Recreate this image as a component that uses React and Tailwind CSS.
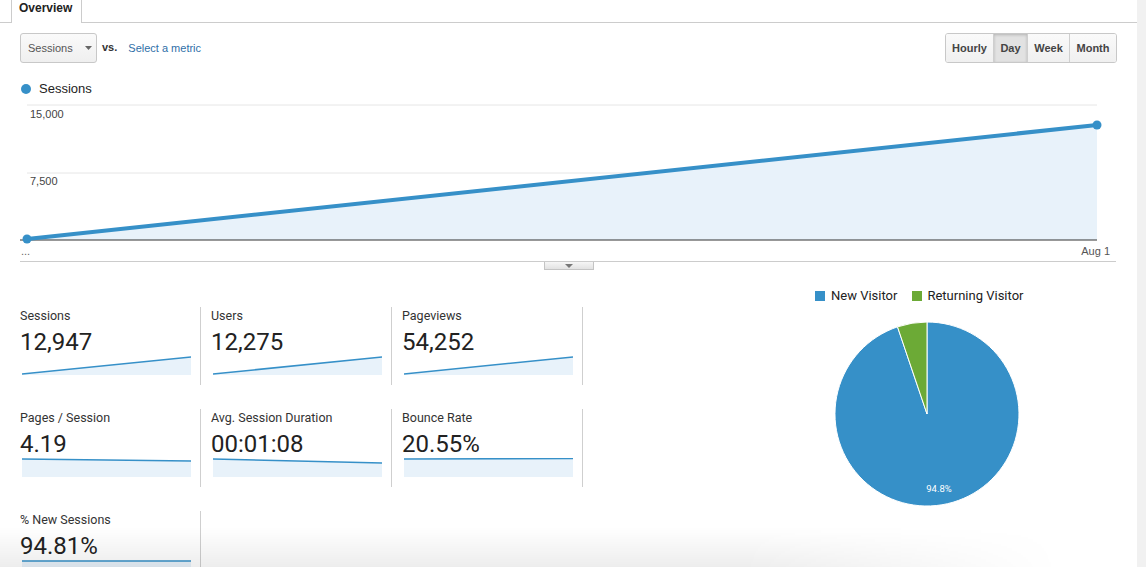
import React from 'react';

const ARIAL = { fontFamily: '"Liberation Sans", Arial, sans-serif' };
const ROBOTO = { fontFamily: 'Roboto, "Liberation Sans", Arial, sans-serif' };

const BLUE = '#3690c8';
const FILL = '#e8f2fa';

// y0/y1 are the line ends inside a 169x19 box
const metrics = [
  [
    { label: 'Sessions', value: '12,947', line: [18, 1] },
    { label: 'Users', value: '12,275', line: [18, 1] },
    { label: 'Pageviews', value: '54,252', line: [18, 1] },
  ],
  [
    { label: 'Pages / Session', value: '4.19', line: [1, 3] },
    { label: 'Avg. Session Duration', value: '00:01:08', line: [1, 5] },
    { label: 'Bounce Rate', value: '20.55%', line: [1, 0.5] },
  ],
  [{ label: '% New Sessions', value: '94.81%', line: [1, 1] }],
];

const Sparkline = ({ line }) => {
  const [a, b] = line;
  return (
    <svg width="169" height="19" className="block ml-[2px]">
      <polygon points={`0,${a} 169,${b} 169,19 0,19`} fill={FILL} />
      <polyline points={`0,${a} 169,${b}`} fill="none" stroke={BLUE} strokeWidth="1.5" />
    </svg>
  );
};

const MetricCell = ({ m, first }) => (
  <div className={`${first ? 'w-[181px]' : 'w-[191px] pl-[10px]'} border-r border-[#cfcfcf] pt-[2px] pb-[10px]`}>
    <div className="text-[12.5px] leading-[14px] text-[#333]" style={ROBOTO}>{m.label}</div>
    <div className="mt-[5px] text-[24px] leading-[28px] text-[#222]" style={ROBOTO}>{m.value}</div>
    <Sparkline line={m.line} />
  </div>
);

const PeriodButtons = () => {
  const items = ['Hourly', 'Day', 'Week', 'Month'];
  const widths = ['w-[47px]', 'w-[34px]', 'w-[42px]', 'w-[47px]'];
  return (
    <div className="flex h-[30px] rounded-[3px] border border-[#c8c8c8] overflow-hidden">
      {items.map((t, i) => (
        <div
          key={t}
          className={`${widths[i]} flex items-center justify-center text-[11px] font-bold text-[#444] ${i > 0 ? 'border-l border-[#cfcfcf]' : ''} ${
            t === 'Day'
              ? 'bg-[#e2e2e2] shadow-[inset_0_1px_3px_rgba(0,0,0,0.2)]'
              : 'bg-gradient-to-b from-[#fafafa] to-[#f0f0f0]'
          }`}
          style={ARIAL}
        >
          {t}
        </div>
      ))}
    </div>
  );
};

const SessionsChart = () => (
  <svg width="1137" height="161" className="block" style={ARIAL}>
    <line x1="27" y1="5" x2="1097" y2="5" stroke="#e6e6e6" />
    <line x1="27" y1="73" x2="1097" y2="73" stroke="#e6e6e6" />
    <text x="30" y="18" fontSize="11" fill="#444">15,000</text>
    <text x="30" y="85" fontSize="11" fill="#444">7,500</text>
    <polygon points="27,139 1097,25 1097,140 27,140" fill={FILL} />
    <line x1="20" y1="140" x2="1097" y2="140" stroke="#333" />
    <polyline points="27,139 1097,25" fill="none" stroke={BLUE} strokeWidth="4" />
    <circle cx="27" cy="139" r="4.5" fill={BLUE} />
    <circle cx="1097" cy="25" r="4.5" fill={BLUE} />
    <text x="21" y="155" fontSize="11" fill="#666">...</text>
    <text x="1110" y="155" fontSize="11" fill="#555" textAnchor="end">Aug 1</text>
  </svg>
);

const VisitorPie = () => (
  <svg width="186" height="186" className="block">
    <path d="M93 93 L93 1 A92 92 0 1 1 63.5 5.85 Z" fill={BLUE} stroke="#fff" strokeWidth="1" />
    <path d="M93 93 L63.5 5.85 A92 92 0 0 1 93 1 Z" fill="#6caa36" stroke="#fff" strokeWidth="1" />
    <text x="105" y="171" fontSize="9.5" fill="#fff" textAnchor="middle" style={ROBOTO}>94.8%</text>
  </svg>
);

export default function App() {
  return (
    <div className="flex w-[1146px] h-[567px] overflow-hidden bg-[#f1f1f1]">
      <div className="relative w-[1137px] h-full bg-white">
        {/* tab strip */}
        <div className="h-[23px] border-b border-[#cccccc] flex">
          <div
            className="ml-[11px] w-[71px] h-[23px] -mb-px bg-white border-x border-[#cccccc] pl-[7px] text-[12px] font-bold leading-[17px] text-[#222]"
            style={ARIAL}
          >
            Overview
          </div>
        </div>

        {/* metric picker + period buttons */}
        <div className="mt-[10px] h-[30px] flex items-center pl-[20px] pr-[20px]">
          <div
            className="w-[77px] h-[30px] rounded-[3px] border border-[#c8c8c8] bg-gradient-to-b from-[#fafafa] to-[#efefef] flex items-center pl-[7px] text-[11px] text-[#555]"
            style={ARIAL}
          >
            Sessions
            <svg width="7" height="4" className="ml-[12px]">
              <polygon points="0,0 7,0 3.5,4" fill="#666" />
            </svg>
          </div>
          <span className="ml-[5px] -mt-[2px] text-[11px] font-bold text-[#333]" style={ARIAL}>vs.</span>
          <span className="ml-[11px] text-[11px] text-[#2f6fa8]" style={ARIAL}>Select a metric</span>
          <div className="ml-auto">
            <PeriodButtons />
          </div>
        </div>

        {/* series legend */}
        <div className="mt-[18px] h-[16px] pl-[21px] flex items-center gap-[8px]">
          <span className="w-[10px] h-[10px] rounded-full bg-[#3690c8]" />
          <span className="text-[13px] text-[#222]" style={ARIAL}>Sessions</span>
        </div>

        <div className="mt-[3px]">
          <SessionsChart />
        </div>
        <div className="ml-[20px] w-[1096px] border-t border-[#cccccc]">
          <div className="ml-[524px] w-[50px] h-[8px] border border-t-0 border-[#c4c4c4] bg-gradient-to-b from-[#f6f6f6] to-[#e2e2e2] flex justify-center pt-[2px]">
            <svg width="8" height="4">
              <polygon points="0,0 8,0 4,4" fill="#777" />
            </svg>
          </div>
        </div>

        <div className="flex">
          {/* scorecards */}
          <div className="ml-[20px] mt-[37px]">
            {metrics.map((row, r) => (
              <div key={r} className="flex mb-[24px]">
                {row.map((m, i) => (
                  <MetricCell key={m.label} m={m} first={i === 0} />
                ))}
              </div>
            ))}
          </div>

          {/* new vs returning */}
          <div className="ml-[232px] mt-[18px]">
            <div className="flex items-center h-[16px] text-[13px] text-[#222]" style={ROBOTO}>
              <span className="w-[10px] h-[10px] bg-[#3690c8]" />
              <span className="ml-[6px]">New Visitor</span>
              <span className="ml-[15px] w-[10px] h-[10px] bg-[#6caa36]" />
              <span className="ml-[5px]">Returning Visitor</span>
            </div>
            <div className="ml-[19px] mt-[17px]">
              <VisitorPie />
            </div>
          </div>
        </div>

        {/* soft shade along the bottom edge */}
        <div className="pointer-events-none absolute left-0 bottom-0 w-[1060px] h-[40px] bg-gradient-to-b from-black/0 to-black/[0.07] [mask-image:linear-gradient(to_right,black_70%,transparent)]" />
      </div>
      <div className="flex-1" />
    </div>
  );
}
